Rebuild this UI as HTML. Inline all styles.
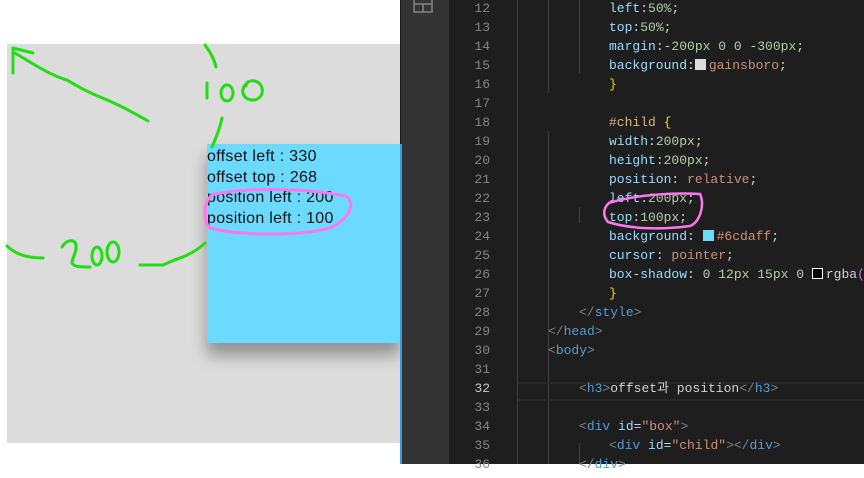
<!DOCTYPE html>
<html><head><meta charset="utf-8"><style>
*{margin:0;padding:0;box-sizing:border-box}
body{width:864px;height:464px;overflow:hidden;background:#fff;position:relative;font-family:"Liberation Sans",sans-serif}
#box{position:absolute;left:7px;top:44px;width:393px;height:399px;background:#dcdcdc}
#child{position:absolute;left:207px;top:144px;width:193px;height:199px;background:#6cdaff;box-shadow:0 12px 15px 0 rgba(0,0,0,.35);font-size:16px;line-height:20.7px;color:#111;padding-top:3px;letter-spacing:0.3px}
#ed{position:absolute;left:400px;top:0;width:464px;height:464px;background:#1e1e1e;font-family:"Liberation Mono",monospace;font-size:13px}
#act{position:absolute;left:1px;top:0;width:48px;height:464px;background:#333}
#edge{position:absolute;left:0;top:144px;width:2px;height:320px;background:#3a9ad9}
.ln{position:absolute;left:49px;width:48px;text-align:right;color:#858585;padding-right:7px}
.cl{position:absolute;white-space:pre;color:#d4d4d4}
.g{position:absolute;width:1px;background:#404040}
.p{color:#9cdcfe}.v{color:#ce9178}.n{color:#b5cea8}.y{color:#ffd700}.t{color:#569cd6}.a{color:#808080}
.sw{display:inline-block;width:11px;height:11px;border:1px solid #fff;vertical-align:-1px;margin-right:3px}
#lines{position:absolute;left:0;top:-2px;width:464px;height:480px}
</style></head><body>
<div id="box"></div>
<div id="child">offset left : 330<br>offset top : 268<br>position left : 200<br>position left : 100</div>
<svg style="position:absolute;left:0;top:0" width="400" height="464" fill="none" stroke-linecap="round" stroke-linejoin="round">
<g stroke="#22dd11" stroke-width="3">
<path d="M13 73 L13 48 L33 53 M15 53 C35 65 50 75 67 80 C80 88 90 93 100 97 C115 103 125 108 148 121"/>
<path d="M205 45 C210 52 214 58 216 67"/>
<path d="M207 83 L207 98"/>
<ellipse cx="227" cy="93" rx="6" ry="8"/>
<path d="M245 85 C240 92 244 100 253 100 C264 100 266 84 255 81 C250 80 246 82 246 86"/>
<path d="M222 118 C220 128 216 138 212 147"/>
<path d="M7 246 C15 254 28 258 43 258"/>
<path d="M62 247 C66 240 75 238 76 245 C77 252 72 258 72 263 C74 267 80 267 90 267"/>
<ellipse cx="97" cy="256" rx="5" ry="9"/>
<ellipse cx="113" cy="252" rx="6" ry="10"/>
<path d="M140 265 L163 265 C170 262 176 259 183 257 C192 253 199 249 205 243"/>
</g>
<path d="M212 195 C240 188 300 187 345 196 C358 202 348 220 330 228 C300 236 240 236 210 228 C203 222 203 202 212 195" stroke="#ff77ee" stroke-width="3"/>
</svg>
<div id="ed">
<div id="act"></div><div id="edge"></div>
<svg style="position:absolute;left:12px;top:-6px" width="22" height="20" fill="none" stroke="#858585" stroke-width="1.5"><rect x="2" y="2" width="18" height="16"/><path d="M2 10H20M11 10V18"/></svg>
<div class="g" style="left:117px;top:0;height:464px"></div>
<div class="g" style="left:148px;top:0;height:93px"></div>
<div class="g" style="left:148px;top:131px;height:333px"></div>
<div class="g" style="left:179px;top:0;height:74px"></div>
<div class="g" style="left:179px;top:207px;height:16px"></div>
<div class="g" style="left:179px;top:443px;height:21px"></div>
<div style="position:absolute;left:118px;top:382px;width:346px;height:19px;border-top:2px solid #282828;border-bottom:2px solid #282828"></div>
<div id="lines">
<div class="ln" style="top:3px">12</div><div class="ln" style="top:22px">13</div><div class="ln" style="top:41px">14</div><div class="ln" style="top:60px">15</div><div class="ln" style="top:79px">16</div><div class="ln" style="top:98px">17</div><div class="ln" style="top:117px">18</div><div class="ln" style="top:136px">19</div><div class="ln" style="top:155px">20</div><div class="ln" style="top:174px">21</div><div class="ln" style="top:193px">22</div><div class="ln" style="top:212px">23</div><div class="ln" style="top:231px">24</div><div class="ln" style="top:250px">25</div><div class="ln" style="top:269px">26</div><div class="ln" style="top:288px">27</div><div class="ln" style="top:307px">28</div><div class="ln" style="top:326px">29</div><div class="ln" style="top:345px">30</div><div class="ln" style="top:364px">31</div><div class="ln" style="top:383px;color:#c6c6c6">32</div><div class="ln" style="top:402px">33</div><div class="ln" style="top:421px">34</div><div class="ln" style="top:440px">35</div><div class="ln" style="top:459px">36</div>
<div class="cl" style="left:209px;top:3px"><span class="p">left</span>:<span class="n">50%</span>;</div>
<div class="cl" style="left:209px;top:22px"><span class="p">top</span>:<span class="n">50%</span>;</div>
<div class="cl" style="left:209px;top:41px"><span class="p">margin</span>:<span class="n">-200px 0 0 -300px</span>;</div>
<div class="cl" style="left:209px;top:60px"><span class="p">background</span>:<span class="sw" style="background:#dcdcdc;border-color:#dcdcdc"></span><span class="v">gainsboro</span>;</div>
<div class="cl y" style="left:209px;top:79px">}</div>
<div class="cl" style="left:209px;top:117px"><span style="color:#d7ba7d">#child</span> <span class="y">{</span></div>
<div class="cl" style="left:209px;top:136px"><span class="p">width</span>:<span class="n">200px</span>;</div>
<div class="cl" style="left:209px;top:155px"><span class="p">height</span>:<span class="n">200px</span>;</div>
<div class="cl" style="left:209px;top:174px"><span class="p">position</span>: <span class="v">relative</span>;</div>
<div class="cl" style="left:209px;top:193px"><span class="p">left</span>:<span class="n">200px</span>;</div>
<div class="cl" style="left:209px;top:212px"><span class="p">top</span>:<span class="n">100px</span>;</div>
<div class="cl" style="left:209px;top:231px"><span class="p">background</span>: <span class="sw" style="background:#6cdaff;border-color:#6cdaff"></span><span class="v">#6cdaff</span>;</div>
<div class="cl" style="left:209px;top:250px"><span class="p">cursor</span>: <span class="v">pointer</span>;</div>
<div class="cl" style="left:209px;top:269px"><span class="p">box-shadow</span>: <span class="n">0 12px 15px 0</span> <span class="sw" style="background:#000"></span>rgba<span style="color:#da70d6">(</span></div>
<div class="cl y" style="left:209px;top:288px">}</div>
<div class="cl" style="left:179px;top:307px"><span class="a">&lt;/</span><span class="t">style</span><span class="a">&gt;</span></div>
<div class="cl" style="left:148px;top:326px"><span class="a">&lt;/</span><span class="t">head</span><span class="a">&gt;</span></div>
<div class="cl" style="left:148px;top:345px"><span class="a">&lt;</span><span class="t">body</span><span class="a">&gt;</span></div>
<div class="cl" style="left:179px;top:383px;font-family:'Liberation Mono','Noto Sans CJK KR',monospace;line-height:15px"><span class="a">&lt;</span><span class="t">h3</span><span class="a">&gt;</span>offset과 position<span class="a">&lt;/</span><span class="t">h3</span><span class="a">&gt;</span></div>
<div class="cl" style="left:179px;top:421px"><span class="a">&lt;</span><span class="t">div</span> <span class="p">id</span>=<span class="v">"box"</span><span class="a">&gt;</span></div>
<div class="cl" style="left:209px;top:440px"><span class="a">&lt;</span><span class="t">div</span> <span class="p">id</span>=<span class="v">"child"</span><span class="a">&gt;&lt;/</span><span class="t">div</span><span class="a">&gt;</span></div>
<div class="cl" style="left:179px;top:459px"><span class="a">&lt;/</span><span class="t">div</span><span class="a">&gt;</span></div>
</div>
<svg style="position:absolute;left:0;top:0" width="464" height="464" fill="none"><path d="M209 203 C230 196 270 192 300 194 C305 205 300 222 290 226 C260 230 230 229 208 222 C202 215 203 206 212 201" stroke="#ff77ee" stroke-width="2.5" stroke-linecap="round"/></svg>
</div>
</body></html>
